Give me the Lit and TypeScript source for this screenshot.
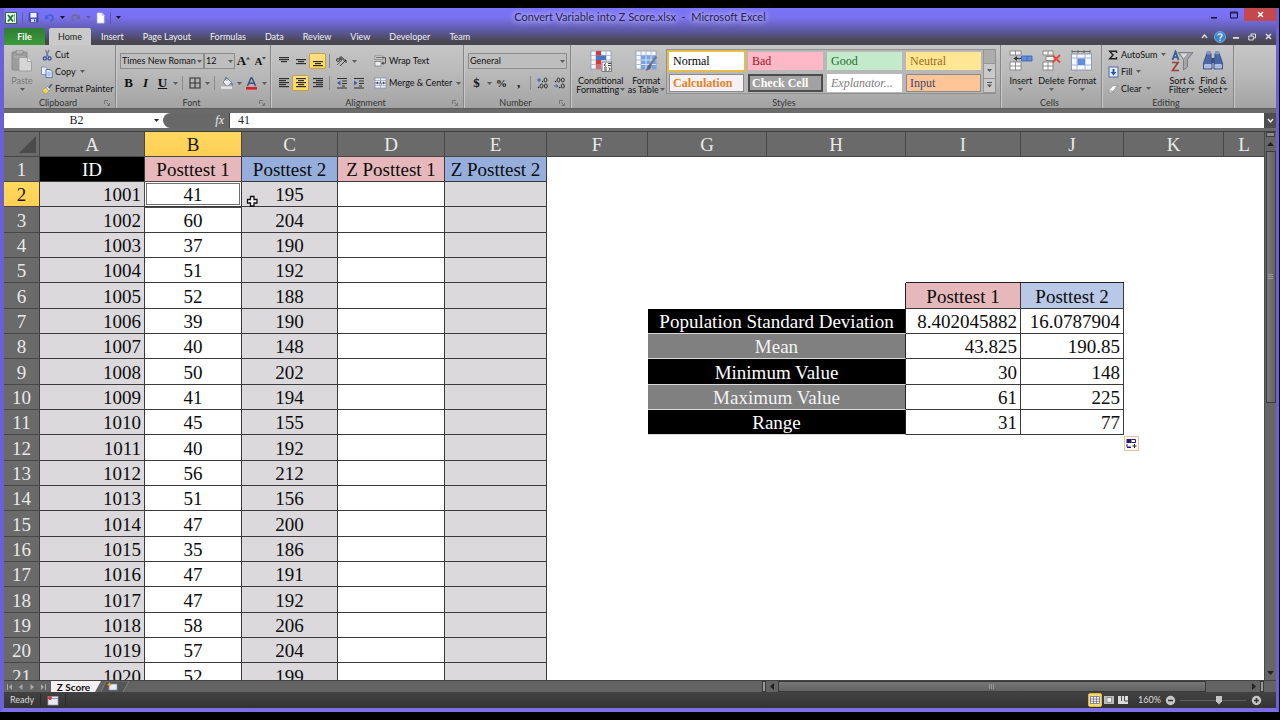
import { LitElement, html, css, svg, nothing, TemplateResult } from "lit";
import { customElement, property } from "lit/decorators.js";
import { classMap } from "lit/directives/class-map.js";

const ico = (w: number, h: number, body: unknown) =>
  html`<svg width=${w} height=${h} viewBox="0 0 ${w} ${h}" aria-hidden="true">${body}</svg>`;

const caret = html`<svg class="caret" width="5" height="3" viewBox="0 0 5 3" aria-hidden="true"><path d="M0 0h5L2.500 3z" fill="currentColor" /></svg>`;

const lines = (rows: Array<[number, number, number]>) =>
  ico(12, 12, rows.map(([x, y, w]) => svg`<rect x=${x} y=${y} width=${w} height="1.200" fill="#2f2f2f"/>`));

const sheetGrid = svg`
  <rect x="1" y="1" width="20" height="18" fill="#f6f8fc" stroke="#8f9bb0" stroke-width=".8"/>
  <path d="M1 5.500h20M1 10h20M1 14.500h20M6 1v18M11 1v18M16 1v18" stroke="#a9b6cc" stroke-width=".9"/>`;

const icons: Record<string, TemplateResult> = {
  excel: ico(12, 12, svg`<rect x=".5" y=".5" width="11" height="11" fill="#eef5ea" stroke="#2c6b34"/><path d="M3 3l5 6.500M8 3l-5 6.500" stroke="#1f7a33" stroke-width="1.900"/><path d="M9.500 2v8" stroke="#7bb07f"/>`),
  save: ico(11, 11, svg`<path d="M1 1h9v9H2L1 9z" fill="#4a55b8" stroke="#2f3a8c" stroke-width=".6"/><rect x="2.500" y="1" width="6" height="4.500" fill="#eef1fb"/><rect x="3" y="7" width="5" height="3" fill="#d5daf0"/><rect x="6" y="7.500" width="1.200" height="2" fill="#333"/>`),
  undo: ico(11, 11, svg`<path d="M2.500 5.500C4 2 9 2.500 9 6c0 1.500-1 2.500-2.500 3" fill="none" stroke="#3f62dd" stroke-width="1.800"/><path d="M1 2.500v4.500h4.500z" fill="#3f62dd"/>`),
  redo: ico(11, 11, svg`<path d="M8.500 5.500C7 2 2 2.500 2 6c0 1.500 1 2.500 2.500 3" fill="none" stroke="#6d6c93" stroke-width="1.800"/><path d="M10 2.500v4.500H5.500z" fill="#6d6c93"/>`),
  page: ico(9, 12, svg`<path d="M1 .8h5l2.300 2.400v8H1z" fill="#fff" stroke="#9aa3bd" stroke-width=".6"/><path d="M6 .8v2.400h2.300" fill="#cfd6ea" stroke="#9aa3bd" stroke-width=".5"/>`),
  paste: ico(22, 22, svg`<rect x="1" y="2" width="15" height="18" rx="1" fill="#9d9d9d" stroke="#8a8a8a"/><rect x="5" y="0" width="7" height="4" rx="1" fill="#b7b7b7" stroke="#7c7c7c" stroke-width=".7"/><path d="M3 6h11v2H3z" fill="#aaa"/><path d="M8 7.500h8.500l4 4V21H8z" fill="#d6d6d6" stroke="#959595" stroke-width=".8"/><path d="M16.500 7.500v4h4" fill="#eee" stroke="#959595" stroke-width=".8"/>`),
  cut: ico(12, 12, svg`<path d="M4.500 1l3 7M8 1L5 8" stroke="#66789f" stroke-width="1.200" fill="none"/><circle cx="3.800" cy="9.400" r="1.600" fill="none" stroke="#2f4b9c" stroke-width="1.200"/><circle cx="8.500" cy="9.400" r="1.600" fill="none" stroke="#2f4b9c" stroke-width="1.200"/>`),
  copy: ico(12, 12, svg`<path d="M.5 1h4l2 2v5.500h-6z" fill="#e9effb" stroke="#5773b5" stroke-width=".7"/><path d="M5 3.500h4l2.300 2.200V11.500H5z" fill="#dfe9fb" stroke="#3f5fae" stroke-width=".8"/><path d="M6.300 7h3.500M6.300 9h3.500" stroke="#6d8cd0" stroke-width=".8"/>`),
  painter: ico(12, 12, svg`<path d="M1 7l4-2.500 3 3L5.500 11 3 10z" fill="#e8d86a" stroke="#a39234" stroke-width=".6"/><path d="M5 4.500l1.500-1 3 3-1.500 1.200z" fill="#f0f2f7" stroke="#6c7894" stroke-width=".6"/><path d="M8 4.800L10.800 1" stroke="#4e6190" stroke-width="1.700"/>`),
  borders: ico(12, 12, svg`<path d="M1 1h10v10H1zM6 1v10M1 6h10" fill="none" stroke="#333" stroke-width="1.100"/>`),
  bucket: ico(14, 12, svg`<path d="M3 5l4-4 4.500 4.500L7 9.500z" fill="#eceff5" stroke="#65718c" stroke-width=".8"/><path d="M5 3V1.500C5 0 7 0 7 1.500V4" fill="none" stroke="#65718c" stroke-width=".8"/><path d="M11 5c1.800 1.200 2 2.500 1.700 4-.9-.5-1.500-2-1.700-4z" fill="#4467b5"/><rect x="1" y="9.500" width="11" height="2.300" fill="#e6e6e6"/>`),
  fontColor: ico(13, 14, svg`<path d="M2.500 10L6 2h1l3.500 8M4 7.200h5" fill="none" stroke="#3b4f86" stroke-width="1.500"/><rect x="1" y="11" width="11" height="2.600" fill="#dc1f26"/>`),
  alignTop: lines([[1, 2, 10], [1, 4, 10], [3, 6, 6]]),
  alignMid: lines([[1, 4, 10], [3, 6, 6], [1, 8, 10]]),
  alignBot: lines([[1, 6, 10], [3, 8, 6], [1, 10, 10]]),
  alignL: lines([[1, 1, 10], [1, 3, 7], [1, 5, 10], [1, 7, 7], [1, 9, 10]]),
  alignC: lines([[1, 1, 10], [3, 3, 6], [1, 5, 10], [3, 7, 6], [1, 9, 10]]),
  alignR: lines([[1, 1, 10], [4, 3, 7], [1, 5, 10], [4, 7, 7], [1, 9, 10]]),
  orient: ico(13, 12, svg`<path d="M2 10L9 3" stroke="#555" stroke-width="1"/><path d="M5 11l6-6M11 5v3M11 5H8" stroke="#333" fill="none" stroke-width="1"/><circle cx="3" cy="5" r="1.500" fill="none" stroke="#333"/><path d="M5 3.500l1.500 1.500" stroke="#333"/><circle cx="6" cy="3" r="1.200" fill="none" stroke="#333"/>`),
  outdent: ico(12, 12, svg`<path d="M1 1.500h10M6 4h5M6 6.500h5M6 9h3M1 11h10" stroke="#2f2f2f" stroke-width="1.100"/><path d="M4.500 3.500v5L1 6z" fill="#3a5db0"/>`),
  indent: ico(12, 12, svg`<path d="M1 1.500h10M6 4h5M6 6.500h5M6 9h3M1 11h10" stroke="#2f2f2f" stroke-width="1.100"/><path d="M1 3.500v5L4.500 6z" fill="#3a5db0"/>`),
  wrap: ico(13, 12, svg`<rect x="1" y="1" width="8" height="3.500" fill="#eee" stroke="#777" stroke-width=".7"/><rect x="1" y="6.500" width="6" height="4.500" fill="#eee" stroke="#777" stroke-width=".7"/><path d="M2 2.700h9.500v5.500H8" fill="none" stroke="#444" stroke-width=".9"/><path d="M9.500 6.500v3.400L7.300 8.200z" fill="#444"/>`),
  merge: ico(13, 12, svg`<rect x="1" y="1" width="11" height="10" fill="#f3f5fa" stroke="#7c8aa8" stroke-width=".7"/><path d="M1 3.500h11M1 8.500h11M6.500 1v2.500M6.500 8.500V11" stroke="#8f9bb8" stroke-width=".7"/><path d="M1.500 6H4M11.500 6H9" stroke="#333"/><path d="M3.200 4.500v3L4.900 6zM9.800 4.500v3L8.100 6z" fill="#333"/><path d="M5.600 7.600l.9-3.200.9 3.200" fill="none" stroke="#223c8f" stroke-width=".8"/>`),
  cond: ico(22, 22, svg`${sheetGrid}<rect x="6" y="1" width="5" height="4.500" fill="#d8373f"/><rect x="6" y="10" width="5" height="4.500" fill="#d8373f"/><rect x="6" y="14.500" width="5" height="4.500" fill="#e2686d"/><rect x="6" y="5.500" width="10" height="4.500" fill="#4a74c4"/><rect x="12" y="12" width="9.500" height="9.500" fill="#f2f2f2" stroke="#666" stroke-width=".8"/><path d="M16 13.500l-2 1.500 2 1.500M18 13.500h3M18 15.500h3M14 18h3M14 20h3M18.500 17.500l2 1.500-2 1.500" fill="none" stroke="#333" stroke-width=".9"/>`),
  table: ico(22, 22, svg`${sheetGrid}<path d="M6 5.500h15V19H6z" fill="#7ba3e0"/><path d="M6 10h15M6 14.500h15M11 5.500V19M16 5.500V19" stroke="#dbe6f8" stroke-width=".9"/><path d="M21.500 6.500l-6.500 8.500" stroke="#6f7a8e" stroke-width="2.200"/><path d="M14.800 14l2 1.600c-.5 3-3 5-6.300 5 1.800-1.600 1.500-5 4.300-6.600z" fill="#5c677c"/>`),
  insert: ico(24, 22, svg`<path d="M1 1h11v4H1zM6.500 1v4M1 12h11v8H1zM6.500 12v8M1 16h11" fill="#fafafa" stroke="#777" stroke-width=".8"/><path d="M12.500 6h10.500v5H12.500z" fill="#5f8ddd" stroke="#3a5fae" stroke-width=".8"/><path d="M18 6v5" stroke="#3a5fae" stroke-width=".8"/><path d="M12 8.500H6" stroke="#334" stroke-width="1.200"/><path d="M8 6v5L4.500 8.500z" fill="#334"/>`),
  del: ico(22, 22, svg`<path d="M2 1h10v4H2zM7 1v4M2 12h10v8H2zM7 12v8M2 16h10" fill="#fafafa" stroke="#777" stroke-width=".8"/><path d="M5 6.500h8v4H5z" fill="#f3f3f3" stroke="#777" stroke-width=".8"/><path d="M12 5.500l7 7M19 5l-7.500 7.500" stroke="#e04a3c" stroke-width="1.900"/>`),
  format: ico(24, 22, svg`<path d="M2 1.500h18M2 0v3M20 0v3M8 0v3M14 0v3" stroke="#555" stroke-width=".8"/><rect x="1.500" y="4" width="20" height="16" fill="#f6f8fc" stroke="#7d8aa5" stroke-width=".8"/><path d="M1.500 8h20M1.500 15h20M7 4v16M15 4v16" stroke="#a3b1ca" stroke-width=".9"/><rect x="7.500" y="8.500" width="7.500" height="6.500" fill="#5d8fdc"/>`),
  sum: ico(10, 10, svg`<path d="M8.500 3V1.300H1.800L5 5 1.800 8.700h6.700V7" fill="none" stroke="#222" stroke-width="1.500"/>`),
  fill: ico(11, 12, svg`<rect x="1" y="1" width="9" height="10" fill="#e6eefb" stroke="#4a68ae" stroke-width="1"/><path d="M4.500 3h2v3h2l-3 3.600-3-3.600h2z" fill="#2c55b8"/>`),
  clear: ico(12, 10, svg`<path d="M1 7l5-5.500h4.500L6 7.500z" fill="#fbfbfb" stroke="#888" stroke-width=".6"/><path d="M1 7h5v2H2zM6 7.500L10.500 1.500v2L6.500 9z" fill="#c9c9cf" stroke="#888" stroke-width=".5"/>`),
  sort: ico(24, 22, svg`<path d="M2.500 10L5.500 1.500 8.500 10M3.500 7.200h4" fill="none" stroke="#3d5c9e" stroke-width="1.800"/><path d="M2 12.500h6L2.500 20.500H9" fill="none" stroke="#a0403c" stroke-width="1.700"/><path d="M8 2.500h15l-5.500 7V17l-4 3V9.500z" fill="#a3a5a9" stroke="#707276" stroke-width=".8"/><path d="M10.500 3.500h7l-4 5z" fill="#d9dadc"/>`),
  find: ico(22, 22, svg`<path d="M5 3h4v4l1 2v10H1.500v-6zM13 3h4l3.500 10v6H12V9l1-2z" fill="#4a68a6" stroke="#2f4577" stroke-width=".8"/><rect x="4.500" y="1" width="4.500" height="3.500" rx="1" fill="#7e97c8"/><rect x="13" y="1" width="4.500" height="3.500" rx="1" fill="#7e97c8"/><rect x="9.500" y="8" width="3" height="5" fill="#3a5285"/><rect x="2" y="14" width="7.500" height="4.500" rx="1" fill="#a9bde4"/><rect x="12.500" y="14" width="7.500" height="4.500" rx="1" fill="#a9bde4"/>`),
  macro: ico(12, 11, svg`<rect x="1" y="1.500" width="10" height="8.500" fill="#e7eaf4" stroke="#9aa2ba" stroke-width=".7"/><path d="M1 3.500h10" stroke="#8fa0cc"/><circle cx="3" cy="3" r="2" fill="#cf3a34"/>`),
  help: ico(12, 12, svg`<circle cx="6" cy="6" r="5.500" fill="#3f86d0" stroke="#79b1e6" stroke-width=".8"/><path d="M4 4.600C4 2.300 8 2.300 8 4.600 8 6 6 6 6 7.600" fill="none" stroke="#fff" stroke-width="1.300"/><circle cx="6" cy="9.300" r=".8" fill="#fff"/>`),
};

const popUps = (label: string, options: string[]) => html`
  <label class="combo">
    <select aria-label=${label}>${options.map((o) => html`<option>${o}</option>`)}</select>
    ${caret}
  </label>`;

@customElement("ribbon-bar")
export class RibbonBar extends LitElement {
  static styles = css`
    :host {
      display: flex;
      height: 64px;
      background: linear-gradient(#c6c6c6, #b9b9b9 45%, #a3a3a3);
      border-bottom: 1px solid #5d5d5d;
      box-sizing: border-box;
      font: 9px/10px Lato, "Open Sans", sans-serif;
      color: #111;
      overflow: hidden;
    }
    svg { display: block; flex: none; }
    .caret { color: #5c5c5c; }
    button {
      font: inherit;
      color: inherit;
      background: none;
      border: 0;
      padding: 0;
      display: flex;
      align-items: center;
      justify-content: center;
      white-space: nowrap;
    }
    .group {
      display: flex;
      flex-direction: column;
      box-sizing: border-box;
      border-right: 1px solid #868686;
      box-shadow: 1px 0 #c9c9c9;
      flex: none;
    }
    .body { display: flex; height: 52px; padding: 0 4px; }
    .styles .body, .cells .body, .editing .body { padding-left: 5px; }
    .caption {
      display: grid;
      grid-template-columns: 10px 1fr 10px;
      align-items: center;
      justify-items: center;
      color: #333;
      height: 11px;
      padding-right: 3px;
    }
    .caption span { grid-column: 2; }
    .clipboard { width: 112px; }
    .clipboard .body { padding-right: 0; }
    .font { width: 155px; }
    .alignment { width: 193px; }
    .number { width: 107px; }
    .styles { width: 430px; }
    .cells { width: 101px; }
    .editing { width: 132px; }
    .stack { display: flex; flex-direction: column; gap: 2px; padding-top: 2px; }
    .stack button { height: 15px; justify-content: flex-start; gap: 2px; }
    .stack .glyph { width: 12px; display: flex; justify-content: center; }
    .stack .caret, .menu .caret { margin-left: 2px; }
    .rows { display: flex; flex-direction: column; gap: 6px; padding-top: 8px; }
    .row { display: flex; height: 16px; align-items: center; }
    .tool { width: 17px; height: 16px; box-sizing: border-box; }
    .tool.on { background: linear-gradient(#fbe08a, #ffd65c); border: 1px solid #c9a142; border-radius: 2px; }
    .drop { width: 8px; height: 16px; }
    .bar { width: 1px; height: 14px; margin: 0 3px; background: #8a8a8a; }
    .tall { height: 42px; margin-top: 5px; }
    .menu { height: 16px; gap: 2px; justify-content: flex-start; padding-left: 1px; }
    .serif { font: 13px/16px "Liberation Serif", serif; }
    .b { font-weight: bold; }
    .i { font-style: italic; font-weight: bold; }
    .u { font-weight: bold; text-decoration: underline; }
    .small { font-size: 11px; font-weight: bold; }
    .big { flex-direction: column; justify-content: flex-start; padding-top: 5px; }
    .big .text { margin-top: 4px; display: flex; flex-direction: column; align-items: center; }
    .big .line { height: 9px; display: flex; align-items: center; gap: 1px; }
    .dim { color: #7a7a7a; }
    .paste { width: 28px; margin-right: 5px; }
    .w30 { width: 30px; }
    .w32 { width: 32px; }
    .w38 { width: 38px; margin: 0 1px 0 2px; }
    .w50 { width: 50px; }
    .w60 { width: 60px; }
    .combo { display: grid; align-items: center; }
    .combo select, .combo .caret { grid-area: 1 / 1; }
    .combo .caret { justify-self: end; margin-right: 2px; pointer-events: none; }
    .combo select {
      appearance: none;
      font: inherit;
      color: inherit;
      width: 100%;
      height: 16px;
      padding: 0 1px;
      background: #bebebe;
      border: 1px solid #8c8c8c;
      border-radius: 0;
    }
    .name .combo:nth-child(1) { width: 84px; }
    .name .combo:nth-child(2) { width: 31px; }
    .kind .combo { width: 99px; }
    .gallery {
      display: flex;
      gap: 2px;
      height: 45px;
      box-sizing: border-box;
      margin-top: 4px;
      border: 1px solid #909090;
      background: #b8b8b8;
    }
    .swatches { display: grid; grid-template-columns: repeat(4, 75px); grid-auto-rows: 18px; gap: 4px; padding: 2px 0 0 2px; }
    .swatches button {
      font: 12px/16px "Liberation Serif", serif;
      justify-content: flex-start;
      padding: 0 3px;
      box-sizing: border-box;
      border: 1px solid transparent;
      overflow: hidden;
    }
    .normal { background: #fff; color: #000; outline: 2px solid #e6bd4c; }
    .swatches .bad { background: #ffb9c6; color: #a3152b; }
    .swatches .good { background: #c3eacb; color: #1c6a2b; }
    .swatches .neutral { background: #ffe695; color: #9c6a16; }
    .swatches .calc { background: #f4f2f4; color: #e8801f; border-color: #8a8a8a; font-weight: bold; }
    .swatches .check { background: #a2a2a2; color: #fff; border: 2px solid #4d4d4d; padding: 0 2px; font-weight: bold; }
    .swatches .expl { background: #fff; color: #7d7d7d; font-style: italic; }
    .swatches .input { background: #ffc597; color: #46466e; border-color: #8a8a8a; }
    .scroll { display: grid; grid-template-rows: repeat(3, 1fr); width: 12px; }
    .scroll button { border-left: 1px solid #969696; border-bottom: 1px solid #969696; background: #c9c9c9; }
    .scroll button:first-child { background: #adadad; }
  `;

  private big(icon: string, cls: string, text: string[]) {
    const oneLine = text.length === 1;
    return html`<button class="big ${cls}">
      ${icons[icon]}
      <span class="text">
        ${text.map((t, i) => html`<span class="line">${t}${!oneLine && i === text.length - 1 ? caret : nothing}</span>`)}
        ${oneLine ? html`<span class="line">${caret}</span>` : nothing}
      </span>
    </button>`;
  }
  private item(icon: string, text: string, drop = false) {
    return html`<button><span class="glyph">${icons[icon]}</span>${text}${drop ? caret : nothing}</button>`;
  }
  private tool(label: string, icon: unknown, cls = "") {
    return html`<button class="tool ${cls}" aria-label=${label}>${icon}</button>`;
  }
  private drop(label: string) {
    return html`<button class="drop" aria-label=${label}>${caret}</button>`;
  }
  private group(cls: string, title: string, body: unknown, launcher = false) {
    return html`<section class="group ${cls}" aria-label=${title}>
      <div class="body">${body}</div>
      <div class="caption"><span>${title}</span>${launcher
        ? ico(6, 6, svg`<path d="M.5 4V.5H4M2.500 2.500l2.500 2.500M5.500 3v2.500H3" fill="none" stroke="#6a6a6a" stroke-width=".8"/>`)
        : nothing}</div>
    </section>`;
  }

  render() {
    const bar = html`<span class="bar"></span>`;
    return html`
      ${this.group("clipboard", "Clipboard", html`
        ${this.big("paste", "paste dim", ["Paste"])}
        <div class="stack">
          ${this.item("cut", "Cut")}${this.item("copy", "Copy", true)}${this.item("painter", "Format Painter")}
        </div>`, true)}
      ${this.group("font", "Font", html`
        <div class="rows">
          <div class="row name">
            ${popUps("Font", ["Times New Roman"])}${popUps("Font size", ["12"])}
            ${this.tool("Grow font", html`A<svg width="4" height="8" viewBox="0 0 4 8"><path d="M0 2.500L2 0l2 2.500z" fill="#444"/></svg>`, "serif b")}
            ${this.tool("Shrink font", html`A<svg width="4" height="8" viewBox="0 0 4 8"><path d="M0 0h4L2 2.500z" fill="#444"/></svg>`, "serif small")}
          </div>
          <div class="row">
            ${this.tool("Bold", "B", "serif b")}${this.tool("Italic", "I", "serif i")}${this.tool("Underline", "U", "serif u")}${this.drop("Underline styles")}
            ${bar}${this.tool("Borders", icons.borders)}${this.drop("Border styles")}${bar}
            ${this.tool("Fill color", icons.bucket)}${this.drop("Fill colors")}
            ${this.tool("Font color", icons.fontColor)}${this.drop("Font colors")}
          </div>
        </div>`, true)}
      ${this.group("alignment", "Alignment", html`
        <div class="rows">
          <div class="row">
            ${this.tool("Top align", icons.alignTop)}${this.tool("Middle align", icons.alignMid)}${this.tool("Bottom align", icons.alignBot, "on")}
            ${bar}${this.tool("Orientation", icons.orient)}${this.drop("Orientations")}
          </div>
          <div class="row">
            ${this.tool("Align left", icons.alignL)}${this.tool("Center", icons.alignC, "on")}${this.tool("Align right", icons.alignR)}
            ${bar}${this.tool("Decrease indent", icons.outdent)}${this.tool("Increase indent", icons.indent)}
          </div>
        </div>
        <span class="bar tall"></span>
        <div class="rows">
          <button class="menu">${icons.wrap}Wrap Text</button>
          <button class="menu">${icons.merge}Merge &amp; Center${caret}</button>
        </div>`, true)}
      ${this.group("number", "Number", html`
        <div class="rows">
          <div class="row kind">${popUps("Number format", ["General"])}</div>
          <div class="row">
            ${this.tool("Accounting format", "$", "serif b")}${this.drop("Currencies")}
            ${this.tool("Percent", "%", "serif small")}${this.tool("Comma", ",", "serif b")}${bar}
            ${this.tool("Increase decimal", ico(13, 12, svg`<path d="M1 3h4M3 1v4" stroke="#3a5db0"/><circle cx="6.500" cy="4.500" r=".7"/><ellipse cx="9.500" cy="3" rx="1.500" ry="2" fill="none" stroke="#333"/><circle cx="2.500" cy="10.500" r=".7"/><ellipse cx="5.500" cy="9" rx="1.500" ry="2" fill="none" stroke="#333"/><ellipse cx="9.800" cy="9" rx="1.500" ry="2" fill="none" stroke="#333"/>`))}
            ${this.tool("Decrease decimal", ico(13, 12, svg`<circle cx="2.500" cy="4.500" r=".7"/><ellipse cx="5.500" cy="3" rx="1.500" ry="2" fill="none" stroke="#333"/><ellipse cx="9.800" cy="3" rx="1.500" ry="2" fill="none" stroke="#333"/><path d="M1 9h4M3.500 7.500L5 9l-1.500 1.500" fill="none" stroke="#3a5db0"/><circle cx="6.800" cy="10.500" r=".7"/><ellipse cx="9.800" cy="9" rx="1.500" ry="2" fill="none" stroke="#333"/>`))}
          </div>
        </div>`, true)}
      ${this.group("styles", "Styles", html`
        ${this.big("cond", "w50", ["Conditional", "Formatting"])}
        ${this.big("table", "w38", ["Format", "as Table"])}
        <div class="gallery">
          <div class="swatches">
            <button class="normal">Normal</button><button class="bad">Bad</button><button class="good">Good</button><button class="neutral">Neutral</button>
            <button class="calc">Calculation</button><button class="check">Check Cell</button><button class="expl">Explanator...</button><button class="input">Input</button>
          </div>
          <div class="scroll">
            <button aria-label="Previous styles"></button>
            <button aria-label="Next styles">${caret}</button>
            <button aria-label="All styles">${ico(5, 6, svg`<path d="M0 .5h5" stroke="#555"/><path d="M0 2.500h5L2.500 5.500z" fill="#555"/>`)}</button>
          </div>
        </div>`)}
      ${this.group("cells", "Cells", html`
        ${this.big("insert", "w30", ["Insert"])}${this.big("del", "w32", ["Delete"])}${this.big("format", "w30", ["Format"])}`)}
      ${this.group("editing", "Editing", html`
        <div class="stack w60">
          ${this.item("sum", "AutoSum", true)}${this.item("fill", "Fill", true)}${this.item("clear", "Clear", true)}
        </div>
        ${this.big("sort", "w32", ["Sort &", "Filter"])}${this.big("find", "w32", ["Find &", "Select"])}`)}
    `;
  }
}

const POST1 = [41, 60, 37, 51, 52, 39, 40, 50, 41, 45, 40, 56, 51, 47, 35, 47, 47, 58, 57, 52];
const POST2 = [195, 204, 190, 192, 188, 190, 148, 202, 194, 155, 192, 212, 156, 200, 186, 191, 192, 206, 204, 199];
const SUMMARY: Record<number, [string, string, string]> = {
  7: ["Population Standard Deviation", "8.402045882", "16.0787904"],
  8: ["Mean", "43.825", "190.85"],
  9: ["Minimum Value", "30", "148"],
  10: ["Maximum Value", "61", "225"],
  11: ["Range", "31", "77"],
};

@customElement("sheet-grid")
export class SheetGrid extends LitElement {
  @property({ type: Number }) activeRow = 2;

  static styles = css`
    :host { display: block; position: relative; overflow: hidden; background: #fff; }
    table {
      table-layout: fixed;
      width: 100%;
      border-collapse: separate;
      border-spacing: 0;
      font: 19px/22px "Liberation Serif", "Times New Roman", serif;
      color: #0c0c0c;
    }
    .rowhead { width: 36px; }
    .a { width: 105px; }
    .b { width: 97px; }
    .c { width: 96px; }
    .d { width: 107px; }
    .e { width: 102px; }
    .f { width: 101px; }
    .g { width: 119px; }
    .h { width: 139px; }
    .i { width: 115px; }
    .j { width: 103px; }
    .k { width: 100px; }
    td, th { height: 25px; padding: 2px 0 0; box-sizing: border-box; text-align: center; font-weight: normal; white-space: nowrap; }
    tbody tr:nth-child(3n) td, tbody tr:nth-child(3n) th { height: 26px; }
    th { background: #6a6a6a; color: #e9e9e9; border-right: 1px solid #474747; border-bottom: 1px solid #474747; }
    tbody th { border-right-color: #3c3c3c; }
    thead th:last-child { border-right: 0; }
    .corner { vertical-align: bottom; }
    .corner svg { display: block; margin: 0 3px 3px auto; }
    th.on { background: linear-gradient(#ffd95f, #ffcf55); color: #1a1a1a; }
    .cell { border-right: 1px solid #3a3a3a; border-bottom: 1px solid #3a3a3a; }
    .shade { background: #dbd9dc; }
    .right { text-align: right; padding-right: 3px; }
    .black { background: #000; color: #fff; }
    .gray { background: #808080; color: #f2f2f2; }
    .label { border-color: #d8d8d8; border-right-color: #222; }
    .pink { background: #e6b8bb; }
    .blue { background: #96aedb; }
    .paleblue { background: #b9c8e6; }
    .under { border-bottom: 1px solid #222; }
    .side { border-right: 1px solid #222; }
    .active { box-shadow: inset 0 0 0 1px #fff, inset 0 0 0 2px #6f6f6f; outline: 1px solid #4a4a4a; }
    .host { position: relative; }
    .cursor { position: absolute; left: 4px; top: 13px; }
    .tag { position: absolute; left: 0; top: 1px; }
  `;

  private leftCells(n: number) {
    if (n === 1)
      return html`<td class="cell black">ID</td><td class="cell pink">Posttest 1</td><td class="cell blue">Posttest 2</td><td class="cell pink">Z Posttest 1</td><td class="cell blue">Z Posttest 2</td>`;
    const active = n === this.activeRow;
    return html`
      <td class="cell shade right">${999 + n}</td>
      <td class=${classMap({ cell: true, active })}>${POST1[n - 2]}</td>
      <td class="cell shade host">${POST2[n - 2]}${active
        ? html`<svg class="cursor" width="13" height="13" viewBox="0 0 13 13"><path d="M4.500 1.500h3.500v3h3v3.500h-3v3H4.500v-3h-3V4.500h3z" fill="#fff" stroke="#111" stroke-width="1.300"/></svg>`
        : nothing}</td>
      <td class="cell"></td>
      <td class="cell shade"></td>`;
  }

  private rightCells(n: number) {
    const s = SUMMARY[n];
    if (s)
      return html`<td></td><td colspan="2" class="cell label ${n % 2 ? "black" : "gray"}">${s[0]}</td><td class="cell right">${s[1]}</td><td class="cell right">${s[2]}</td><td></td><td></td>`;
    if (n === 5)
      return html`<td></td><td></td><td></td><td class="under"></td><td class="under"></td><td></td><td></td>`;
    if (n === 6)
      return html`<td></td><td></td><td class="side"></td><td class="cell pink">Posttest 1</td><td class="cell paleblue">Posttest 2</td><td></td><td></td>`;
    if (n === 12)
      return html`<td></td><td></td><td></td><td></td><td></td><td class="host"><svg class="tag" width="15" height="15" viewBox="0 0 15 15"><rect x=".5" y=".5" width="14" height="14" fill="#fff8f2" stroke="#e3c1a4"/><rect x="2.500" y="3" width="5" height="4" fill="#1d1d78"/><path d="M7.500 3.500h4v3h-4M3 8v3h4M3 11.500h4" fill="none" stroke="#1d1d78"/><path d="M8.500 10h4M10.500 8v4" stroke="#222"/></svg></td><td></td>`;
    return Array.from({ length: 7 }, () => html`<td></td>`);
  }

  render() {
    const cols = "ABCDEFGHIJKL".split("");
    const rows = Array.from({ length: 21 }, (_, i) => i + 1);
    return html`<table>
      <colgroup><col class="rowhead" />${cols.map((c) => html`<col class=${c.toLowerCase()} />`)}</colgroup>
      <thead><tr>
        <th class="corner">${ico(17, 17, svg`<path d="M17 0v17H0z" fill="#4b4b4b"/>`)}</th>
        ${cols.map((c) => html`<th scope="col" class=${classMap({ on: c === "B" })}>${c}</th>`)}
      </tr></thead>
      <tbody>${rows.map((n) => html`<tr>
        <th scope="row" class=${classMap({ on: n === this.activeRow })}>${n}</th>
        ${this.leftCells(n)}${this.rightCells(n)}
      </tr>`)}</tbody>
    </table>`;
  }
}

@customElement("app-root")
export class AppRoot extends LitElement {
  static styles = css`
    :host {
      display: flex;
      flex-direction: column;
      height: 100vh;
      box-sizing: border-box;
      padding: 8px 0;
      background: #000;
      font: 9px/10px Lato, "Open Sans", sans-serif;
      color: #1c1c1c;
    }
    svg { display: block; flex: none; }
    button { font: inherit; color: inherit; background: none; border: 0; padding: 0; display: flex; align-items: center; justify-content: center; white-space: nowrap; }
    input { font: inherit; color: inherit; border: 0; border-radius: 0; padding: 0; margin: 0; min-width: 0; outline: 0; }
    .window {
      flex: 1;
      min-height: 0;
      display: flex;
      flex-direction: column;
      margin-right: 1px;
      border: solid #6c60d6;
      border-width: 0 3px 4px 4px;
      border-bottom-color: #7b6ee8;
      background: #6a6a6a;
    }
    .chrome { background: linear-gradient(#7a73fb, #7971f0 25%, #5f5aa6 60%, #484650 90%); }
    .titlebar { display: grid; grid-template-columns: 1fr auto 1fr; height: 20px; }
    .quick { display: flex; align-items: center; height: 19px; gap: 5px; padding-left: 1px; color: #16162e; }
    .quick .rule { width: 1px; height: 12px; background: #5a55ad; }
    .title {
      font-size: 11px;
      line-height: 18px;
      color: #26244c;
      text-shadow: 0 0 4px #b9b5f5, 0 0 6px #b9b5f5, 0 0 8px #b9b5f5;
      white-space: pre;
      margin: 0;
      font-weight: normal;
    }
    .controls { display: flex; justify-content: flex-end; height: 13px; }
    .controls button { width: 20px; }
    .controls .close { width: 32px; background: #c5484f; }
    .tabs { display: flex; height: 17px; gap: 1px; color: #f0f0f6; }
    .tabs button { padding: 0 9px; }
    .tabs .file { width: 41px; background: linear-gradient(#2e7d32, #3a9a3a); color: #fff; margin-right: 3px; font-weight: bold; border-radius: 2px 2px 0 0; }
    .tabs .home { width: 42px; background: #cacaca; color: #1c1c1c; border-radius: 2px 2px 0 0; }
    .help { display: flex; margin-left: auto; }
    .help button { width: 16px; padding: 0; }
    .formula { display: flex; height: 15px; margin: 4px 0 3px; font: 12px/15px "Liberation Serif", serif; color: #222; }
    .namebox { width: 159px; display: flex; align-items: center; background: #fff; }
    .namebox input { flex: 1; text-align: center; background: none; }
    .namebox button { width: 14px; height: 15px; color: #222; }
    .fx { width: 66px; display: flex; background: #fff; }
    .fx button { flex: 1; justify-content: flex-end; padding-right: 5px; background: #686868; border-radius: 8px 0 0 8px; color: #eee; font-style: italic; }
    .entry { flex: 1; background: #fff; border-left: 1px solid #444; }
    .entry input { width: 100%; height: 15px; padding-left: 8px; box-sizing: border-box; background: none; }
    .expand { width: 12px; background: #4e4e4e; }
    .work { flex: 1; min-height: 0; display: flex; border-top: 1px solid #3f3f3f; }
    sheet-grid { flex: 1; min-width: 0; }
    .vscroll { width: 12px; box-sizing: border-box; border-left: 1px solid #4a4a4a; display: flex; flex-direction: column; align-items: center; background: #666; }
    .vscroll .split { width: 9px; height: 5px; box-sizing: border-box; border: 1px solid #3d3d3d; background: #8a8a8a; }
    .vscroll button { width: 11px; height: 14px; }
    .vthumb { width: 10px; flex: 251; border: 1px solid #3a3a3a; box-sizing: border-box; background: linear-gradient(90deg, #7a7a7a, #626262); display: flex; align-items: center; justify-content: center; }
    .vrest { flex: 265; }
    .bottom { display: grid; grid-template-columns: 758px 1fr; height: 12px; background: #636363; border-top: 1px solid #444; box-sizing: border-box; }
    .sheets { display: flex; align-items: center; color: #a9a9a9; }
    .sheets .nav { width: 11px; height: 11px; }
    .sheets .tab {
      width: 50px;
      height: 11px;
      margin-left: 3px;
      padding-right: 5px;
      background: #f3eff2;
      color: #111;
      font-size: 10px;
      font-weight: bold;
      clip-path: polygon(0 0, 100% 0, 88% 100%, 0 100%);
    }
    .sheets .new { width: 28px; height: 11px; }
    .hscroll { display: flex; align-items: stretch; }
    .hscroll .split { width: 4px; box-sizing: border-box; border: 1px solid #3a3a3a; background: #999; }
    .hscroll button { width: 12px; }
    .hthumb { flex: 427; border: 1px solid #3a3a3a; box-sizing: border-box; background: linear-gradient(#777, #626262); display: flex; align-items: center; justify-content: center; }
    .hrest { flex: 42; }
    .status { display: flex; align-items: center; height: 16px; background: linear-gradient(#424242, #343434); color: #dcdcdc; padding-left: 6px; }
    .status .rule { width: 1px; height: 12px; background: #2a2a2a; margin: 0 6px; }
    .view { display: flex; align-items: center; margin-left: auto; }
    .view button { width: 14px; height: 14px; }
    .view .on { background: #f7d975; border: 1px solid #e0b33f; box-sizing: border-box; border-radius: 2px; }
    .zoom { display: flex; align-items: center; margin-left: 8px; padding-right: 14px; gap: 4px; }
    .zoom button { width: 12px; height: 12px; }
    .zoom .amount { width: 22px; }
    input[type="range"] { appearance: none; width: 66px; height: 12px; background: linear-gradient(#5e5e5e, #5e5e5e) center / 100% 1px no-repeat; }
    input[type="range"]::-webkit-slider-thumb { appearance: none; width: 6px; height: 9px; background: #c4c4c4; clip-path: polygon(0 0, 100% 0, 100% 65%, 50% 100%, 0 65%); }
  `;

  private glyph(label: string, w: number, h: number, body: unknown, cls = "") {
    return html`<button class=${cls} aria-label=${label}>${ico(w, h, body)}</button>`;
  }

  render() {
    const tabs = ["Insert", "Page Layout", "Formulas", "Data", "Review", "View", "Developer", "Team"];
    return html`<div class="window">
      <header class="chrome">
        <div class="titlebar">
          <div class="quick">
            ${icons.excel}<span class="rule"></span>
            <button aria-label="Save">${icons.save}</button>
            <button aria-label="Undo">${icons.undo}</button>${caret}
            <button aria-label="Redo">${icons.redo}</button>${ico(5, 3, svg`<path d="M0 0h5L2.500 3z" fill="#5d58a4"/>`)}
            <button aria-label="New">${icons.page}</button>
            <span class="rule"></span>${caret}
          </div>
          <h1 class="title">Convert Variable into Z Score.xlsx  -  Microsoft Excel</h1>
          <div class="controls">
            ${this.glyph("Minimize", 8, 8, svg`<rect x="1" y="6" width="6" height="1.500" fill="#15132e"/>`)}
            ${this.glyph("Maximize", 8, 8, svg`<path d="M.5 1h7v6h-7zM.5 2h7" fill="none" stroke="#15132e"/>`)}
            ${this.glyph("Close", 7, 7, svg`<path d="M1 1l5 5M6 1L1 6" stroke="#fff" stroke-width="1.500"/>`, "close")}
          </div>
        </div>
        <nav class="tabs">
          <button class="file">File</button><button class="home">Home</button>
          ${tabs.map((t) => html`<button>${t}</button>`)}
          <div class="help">
            ${this.glyph("Collapse ribbon", 7, 5, svg`<path d="M1 4l2.500-3L6 4" fill="none" stroke="#ddd" stroke-width="1.400"/>`)}
            <button aria-label="Help">${icons.help}</button>
            ${this.glyph("Minimize workbook", 8, 6, svg`<rect x="1" y="3" width="6" height="1.800" fill="#ddd"/>`)}
            ${this.glyph("Restore workbook", 8, 8, svg`<path d="M3 3V1h4.500v4H5.500M.8 3h4.500v4H.8z" fill="none" stroke="#ddd"/>`)}
            ${this.glyph("Close workbook", 7, 7, svg`<path d="M1 1l5 5M6 1L1 6" stroke="#ddd" stroke-width="1.500"/>`)}
          </div>
        </nav>
      </header>
      <ribbon-bar></ribbon-bar>
      <div class="formula">
        <div class="namebox"><input aria-label="Name box" .value=${"B2"} /><button aria-label="Names">${caret}</button></div>
        <div class="fx"><button aria-label="Insert function">fx</button></div>
        <div class="entry"><input aria-label="Formula bar" .value=${"41"} /></div>
        ${this.glyph("Expand formula bar", 7, 5, svg`<path d="M1 1l2.500 3L6 1" fill="none" stroke="#eee" stroke-width="1.400"/>`, "expand")}
      </div>
      <main class="work">
        <sheet-grid></sheet-grid>
        <div class="vscroll">
          <span class="split"></span>
          ${this.glyph("Scroll up", 7, 4, svg`<path d="M0 4l3.500-4L7 4z" fill="#222"/>`)}
          <div class="vthumb">${ico(5, 6, svg`<path d="M0 .5h5M0 2.500h5M0 4.500h5" stroke="#999"/>`)}</div>
          <div class="vrest"></div>
          ${this.glyph("Scroll down", 7, 4, svg`<path d="M0 0h7L3.500 4z" fill="#222"/>`)}
        </div>
      </main>
      <div class="bottom">
        <div class="sheets">
          ${this.glyph("First sheet", 6, 6, svg`<path d="M.5 0v6" stroke="#aaa"/><path d="M5 0v6L2 3z" fill="#aaa"/>`, "nav")}
          ${this.glyph("Previous sheet", 6, 6, svg`<path d="M4.500 0v6L1 3z" fill="#aaa"/>`, "nav")}
          ${this.glyph("Next sheet", 6, 6, svg`<path d="M1.500 0v6L5 3z" fill="#aaa"/>`, "nav")}
          ${this.glyph("Last sheet", 6, 6, svg`<path d="M5.500 0v6" stroke="#aaa"/><path d="M1 0v6l3-3z" fill="#aaa"/>`, "nav")}
          <button class="tab">Z Score</button>
          <button class="new" aria-label="Insert sheet">${ico(28, 11, svg`<path d="M0 11L5 0h23l-6 11" fill="#565656" stroke="#888" stroke-width=".8"/><g transform="translate(6 1)"><rect x="2" y="2" width="8" height="6" fill="#e9ecf5" stroke="#8b93ad" stroke-width=".7"/><path d="M2.500 0l.9 1.700L5 2.500l-1.600.9-.9 1.700-.9-1.700L0 2.500l1.600-.8z" fill="#f09a3e"/></g>`)}</button>
        </div>
        <div class="hscroll">
          <span class="split"></span>
          ${this.glyph("Scroll left", 4, 7, svg`<path d="M4 0v7L0 3.500z" fill="#222"/>`)}
          <div class="hthumb">${ico(6, 5, svg`<path d="M.5 0v5M2.500 0v5M4.500 0v5" stroke="#999"/>`)}</div>
          <div class="hrest"></div>
          ${this.glyph("Scroll right", 4, 7, svg`<path d="M0 0v7l4-3.500z" fill="#222"/>`)}
          <span class="split"></span>
          <button aria-hidden="true" tabindex="-1"></button>
        </div>
      </div>
      <footer class="status">
        <span>Ready</span><span class="rule"></span>
        <button aria-label="Record macro">${icons.macro}</button><span class="rule"></span>
        <div class="view">
          ${this.glyph("Normal view", 10, 8, svg`<path d="M.5.5h9v7h-9zM.5 3h9M.5 5.300h9M3.500.5v7M6.500.5v7" fill="#fff" stroke="#6a6f86" stroke-width=".8"/>`, "on")}
          ${this.glyph("Page layout view", 10, 8, svg`<rect width="10" height="8" fill="#bdbdbd"/><rect x="3" y="1.500" width="4.500" height="5" fill="#eee" stroke="#777" stroke-width=".7"/>`)}
          ${this.glyph("Page break view", 10, 8, svg`<rect width="10" height="8" fill="#dcdcdc"/><path d="M3.500 0v5M6.500 0v5H10" fill="none" stroke="#555"/>`)}
          <div class="zoom">
            <span class="amount">160%</span>
            ${this.glyph("Zoom out", 11, 11, svg`<circle cx="5.500" cy="5.500" r="4.700" fill="#c6c6c6"/><path d="M3 5.500h5" stroke="#333" stroke-width="1.500"/>`)}
            <input type="range" aria-label="Zoom" min="10" max="260" .value=${"160"} />
            ${this.glyph("Zoom in", 11, 11, svg`<circle cx="5.500" cy="5.500" r="4.700" fill="#c6c6c6"/><path d="M3 5.500h5M5.500 3v5" stroke="#333" stroke-width="1.500"/>`)}
          </div>
        </div>
      </footer>
    </div>`;
  }
}
